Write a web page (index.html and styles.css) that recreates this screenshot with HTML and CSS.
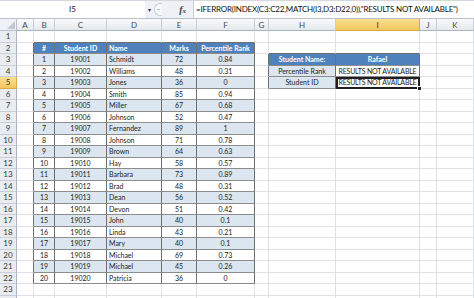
FILE: index.html
```html
<!DOCTYPE html>
<html>
<head>
    <title>Percentile Rank Lookup</title>
    <link rel="stylesheet" href="styles.css">
</head>
<body>
    <div class="formula-bar">
        <div class="name-box">I5</div>
        <div class="name-arrow">&#9662;</div>
        <div class="bar-grip"><span></span></div>
        <div class="fx-button"><i>f</i><span>x</span></div>
        <div class="formula-input">=IFERROR(INDEX(C3:C22,MATCH(I3,D3:D22,0)),"RESULTS NOT AVAILABLE")</div>
    </div>

    <table class="sheet">
        <colgroup>
            <col class="w-head">
            <col class="w-a">
            <col class="w-b">
            <col class="w-c">
            <col class="w-d">
            <col class="w-e">
            <col class="w-f">
            <col class="w-g">
            <col class="w-h">
            <col class="w-i">
            <col class="w-j">
            <col class="w-k">
        </colgroup>
        <thead>
            <tr id="columnHeads">
                <th class="corner"><svg width="8" height="8" viewBox="0 0 8 8"><path d="M8 0 L8 8 L0 8 Z" fill="#c3c8cf"/></svg></th>
            </tr>
        </thead>
        <tbody id="sheetBody">
            <!-- Rows are built below -->
        </tbody>
    </table>

    <script>
        // Student data: id, name, marks, percentile rank
        const students = [
            [19001, 'Schmidt', 72, 0.84],
            [19002, 'Williams', 48, 0.31],
            [19003, 'Jones', 36, 0],
            [19004, 'Smith', 85, 0.94],
            [19005, 'Miller', 67, 0.68],
            [19006, 'Johnson', 52, 0.47],
            [19007, 'Fernandez', 89, 1],
            [19008, 'Johnson', 71, 0.78],
            [19009, 'Brown', 64, 0.63],
            [19010, 'Hay', 58, 0.57],
            [19011, 'Barbara', 73, 0.89],
            [19012, 'Brad', 48, 0.31],
            [19013, 'Dean', 56, 0.52],
            [19014, 'Devon', 51, 0.42],
            [19015, 'John', 40, 0.1],
            [19016, 'Linda', 43, 0.21],
            [19017, 'Mary', 40, 0.1],
            [19018, 'Michael', 69, 0.73],
            [19019, 'Michael', 45, 0.26],
            [19020, 'Patricia', 36, 0]
        ];

        const columns = ['A', 'B', 'C', 'D', 'E', 'F', 'G', 'H', 'I', 'J', 'K'];
        const activeColumn = 'I';
        const activeRow = 5;
        const visibleRows = 23; // row 24 only peeks in at the bottom edge
        const cells = {};

        function setCell(ref, text, cls) {
            cells[ref] = { text: text, cls: cls };
        }

        function addClass(ref, cls) {
            if (!cells[ref]) {
                cells[ref] = { text: '', cls: '' };
            }
            cells[ref].cls += ' ' + cls;
        }

        // Main table B2:F22
        function fillMainTable() {
            const heads = ['#', 'Student ID', 'Name', 'Marks', 'Percentile Rank'];
            const keys = ['B', 'C', 'D', 'E', 'F'];

            heads.forEach((text, i) => {
                setCell(keys[i] + 2, text, 'tbl head-cell' + (keys[i] === 'D' ? ' left' : ''));
            });

            students.forEach((student, i) => {
                const row = i + 3;
                const band = i % 2 === 0 ? 'band' : 'plain';
                setCell('B' + row, i + 1, 'tbl ' + band);
                setCell('C' + row, student[0], 'tbl ' + band);
                setCell('D' + row, student[1], 'tbl left ' + band);
                setCell('E' + row, student[2], 'tbl ' + band);
                setCell('F' + row, student[3], 'tbl ' + band);
            });

            for (let row = 2; row <= 22; row++) {
                addClass('A' + row, 'edge-right');
            }
            keys.forEach(key => addClass(key + 1, 'edge-bottom'));
        }

        // Lookup table H3:I5
        function fillLookupTable() {
            setCell('H3', 'Student Name:', 'tbl head-cell');
            setCell('I3', 'Rafael', 'tbl head-cell');
            setCell('H4', 'Percentile Rank', 'tbl band');
            setCell('I4', 'RESULTS NOT AVAILABLE', 'tbl plain caps');
            setCell('H5', 'Student ID', 'tbl band');
            setCell('I5', 'RESULTS NOT AVAILABLE', 'tbl plain caps active');

            for (let row = 3; row <= 5; row++) {
                addClass('G' + row, 'edge-right');
            }
            addClass('H2', 'edge-bottom');
            addClass('I2', 'edge-bottom');
        }

        function renderSheet() {
            const headRow = document.getElementById('columnHeads');
            columns.forEach(col => {
                const th = document.createElement('th');
                th.className = 'col-head' + (col === activeColumn ? ' selected' : '');
                th.textContent = col;
                headRow.appendChild(th);
            });

            const body = document.getElementById('sheetBody');
            for (let row = 1; row <= visibleRows + 1; row++) {
                const tr = document.createElement('tr');

                const rowHead = document.createElement('th');
                rowHead.className = 'row-head' + (row === activeRow ? ' selected' : '');
                rowHead.textContent = row <= visibleRows ? row : '';
                tr.appendChild(rowHead);

                columns.forEach(col => {
                    const td = document.createElement('td');
                    const cell = cells[col + row];
                    if (cell) {
                        td.className = cell.cls.trim();
                        td.textContent = cell.text;
                    }
                    tr.appendChild(td);
                });

                body.appendChild(tr);
            }
        }

        fillMainTable();
        fillLookupTable();
        renderSheet();
    </script>
</body>
</html>
```

FILE: styles.css
```css
body {
    margin: 0;
    width: 474px;
    height: 298px;
    overflow: hidden;
    background-color: #fff;
    font-family: Lato, "Liberation Sans", sans-serif;
    color: #000;
}

/* Formula bar */
.formula-bar {
    display: flex;
    height: 19px;
    box-sizing: border-box;
    border-top: 1px solid #d4d8de;
    border-bottom: 1px solid #b8c0ca;
    background-color: #eef1f5;
    font-size: 8px;
}

.name-box {
    width: 145px;
    background-color: #fff;
    text-align: center;
    line-height: 17px;
    color: #222;
}

.name-arrow {
    width: 9px;
    font-size: 6px;
    line-height: 17px;
    text-align: center;
    color: #333;
}

.bar-grip {
    width: 7px;
    margin: 2px 0;
    border: 1px solid #c9cdd3;
    border-right: none;
    border-radius: 6px 0 0 6px;
    background-color: #f7f8fa;
    position: relative;
}

.bar-grip span {
    position: absolute;
    top: 5px;
    left: 2px;
    width: 3px;
    height: 1px;
    background-color: #b8bcc2;
}

.fx-button {
    width: 31px;
    text-align: right;
    padding-right: 7px;
    box-sizing: border-box;
    font-family: "Liberation Serif", serif;
    font-size: 10px;
    font-weight: bold;
    line-height: 17px;
    color: #444;
}

.fx-button span {
    font-size: 7px;
    font-style: italic;
}

.formula-input {
    flex: 1;
    background-color: #fff;
    border-left: 1px solid #c9cdd3;
    padding-left: 2px;
    line-height: 17px;
    letter-spacing: -0.2px;
    white-space: nowrap;
    overflow: hidden;
    color: #111;
}

/* Grid */
.sheet {
    border-collapse: separate;
    border-spacing: 0;
    table-layout: fixed;
    width: 474px;
}

.w-head { width: 17px; }
.w-a { width: 17px; }
.w-b { width: 21px; }
.w-c { width: 52px; }
.w-d { width: 55px; }
.w-e { width: 35px; }
.w-f { width: 58px; }
.w-g { width: 14px; }
.w-h { width: 67px; }
.w-i { width: 84px; }
.w-j { width: 17px; }
.w-k { width: 37px; }

.sheet th,
.sheet td {
    padding: 0 2px;
    border-right: 1px solid #dde1e6;
    border-bottom: 1px solid #dde1e6;
    font-size: 7px;
    line-height: 10px;
    white-space: nowrap;
    overflow: hidden;
    text-align: center;
    vertical-align: middle;
    color: #222;
}

.sheet tbody tr {
    height: 11.5px;
}

.sheet thead tr {
    height: 12px;
}

.sheet .corner {
    background-color: #eef1f5;
    text-align: right;
    vertical-align: bottom;
    padding: 0 1px 1px 0;
    border-right: 1px solid #b8c0ca;
    border-bottom: 1px solid #b8c0ca;
}

.corner svg {
    display: block;
    margin-left: auto;
}

.sheet .col-head {
    font-weight: normal;
    font-size: 8px;
    color: #4a4a4a;
    background: linear-gradient(#f9fafb, #e5e9ee);
    border-right: 1px solid #c7ced7;
    border-bottom: 1px solid #a9b4c1;
}

.sheet .row-head {
    font-weight: normal;
    font-size: 8px;
    color: #3a3a3a;
    background-color: #e9ecf0;
    border-right: 1px solid #a9b4c1;
    border-bottom: 1px solid #c7ced7;
}

.sheet .col-head.selected,
.sheet .row-head.selected {
    background: linear-gradient(#f9e08e, #f2c660);
    border-color: #d9a841;
    color: #333;
}

/* Table cells */
.sheet .tbl {
    border-right-color: #6e6e6e;
    border-bottom-color: #8c8c8c;
}

.sheet .edge-right {
    border-right-color: #6e6e6e;
}

.sheet .edge-bottom {
    border-bottom-color: #6e6e6e;
}

.sheet .head-cell {
    background-color: #4f81bd;
    color: #fff;
    font-weight: bold;
}

.band {
    background-color: #dce6f1;
}

.plain {
    background-color: #fff;
}

.sheet .left {
    text-align: left;
}

.sheet .caps {
    padding: 0 1px;
    letter-spacing: -0.2px;
}

.sheet .active {
    position: relative;
    overflow: visible;
    outline: 2px solid #1e1e1e;
    outline-offset: -2px;
}

.active::after {
    content: "";
    position: absolute;
    right: -3px;
    bottom: -3px;
    width: 3px;
    height: 3px;
    background-color: #1e1e1e;
    border: 1px solid #fff;
}
```
